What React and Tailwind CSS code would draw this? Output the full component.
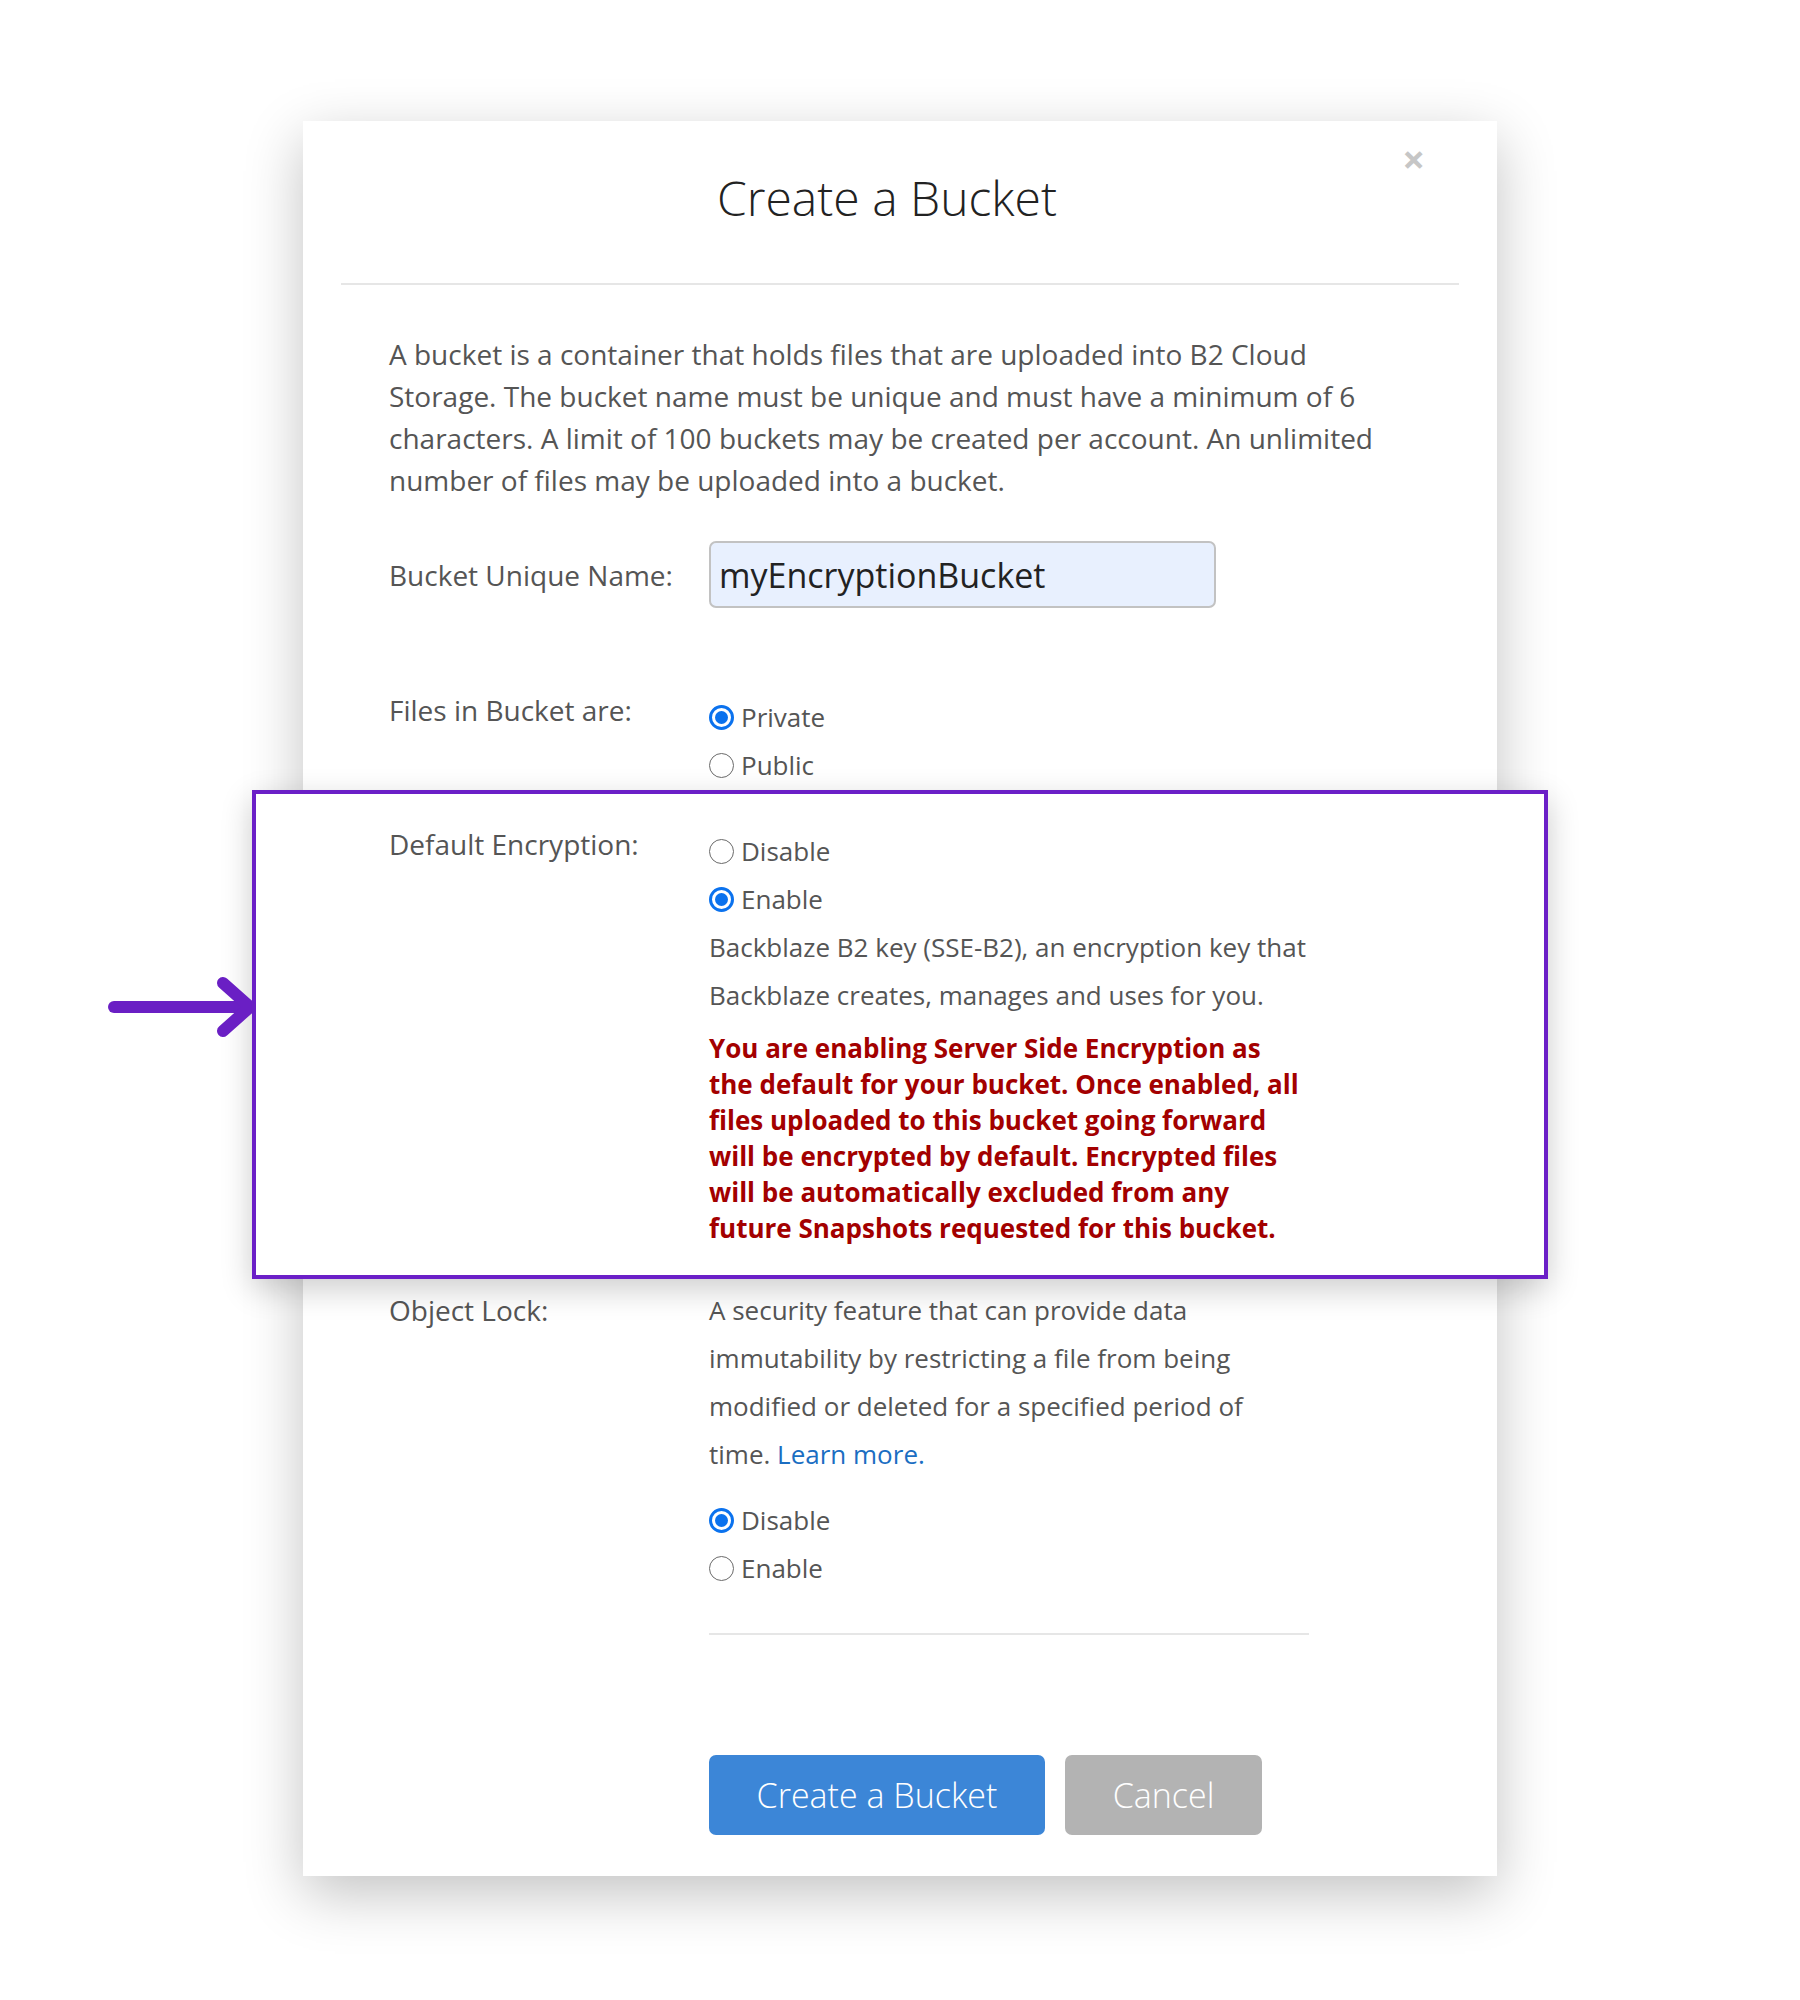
import React from "react";

function Radio({ checked, label }) {
  return (
    <label className="flex h-[48px] items-center">
      {checked ? (
        <span className="flex h-[25px] w-[25px] items-center justify-center rounded-full border-[3px] border-[#0b72ee] bg-white">
          <span className="h-[13px] w-[13px] rounded-full bg-[#0b72ee]" />
        </span>
      ) : (
        <span className="h-[25px] w-[25px] rounded-full border-[1.5px] border-[#6a6a6a] bg-white" />
      )}
      <span className="ml-[7px] text-[26px] text-[#555]">{label}</span>
    </label>
  );
}

export default function App() {
  return (
    <div className="min-h-[2000px] bg-white pt-[121px] font-['Open_Sans',sans-serif]">
      <div className="relative mx-auto w-[1194px] bg-white pb-[41px] shadow-[0_18px_55px_rgba(0,0,0,0.24)]">
        <button className="absolute right-[72px] top-[18px] text-[40px] font-bold leading-none text-[#c6c6c6]">
          ×
        </button>

        <h1 className="pr-[26px] pt-[47px] text-center text-[48px] font-light leading-[60px] text-[#222]">
          Create a Bucket
        </h1>
        <div className="mx-[38px] mt-[55px] h-[2px] bg-[#e6e6e6]" />

        <div className="px-[86px]">
          <p className="mt-[48px] text-[28px] leading-[42px] text-[#555]">
            A bucket is a container that holds files that are uploaded into B2 Cloud
            <br />
            Storage. The bucket name must be unique and must have a minimum of 6
            <br />
            characters. A limit of 100 buckets may be created per account. An unlimited
            <br />
            number of files may be uploaded into a bucket.
          </p>

          <div className="mt-[40px] flex items-center">
            <div className="w-[320px] text-[28px] text-[#555]">Bucket Unique Name:</div>
            <input
              defaultValue="myEncryptionBucket"
              className="h-[67px] w-[507px] rounded-[7px] border-2 border-[#c2c2c2] bg-[#e8f0fe] pl-[8px] text-[34px] text-[#222] outline-none"
            />
          </div>

          <div className="mt-[85px] flex">
            <div className="w-[320px] text-[28px] leading-[34px] text-[#555]">Files in Bucket are:</div>
            <div>
              <Radio checked label="Private" />
              <Radio label="Public" />
            </div>
          </div>
        </div>

        <div className="relative -mx-[51px] mt-[1px] flex border-4 border-[#6b1fc7] bg-white pb-[29px] pl-[133px] pt-[33px] shadow-[0_10px_30px_rgba(0,0,0,0.2)]">
          <svg
            className="absolute left-[-154px] top-[178px] overflow-visible"
            width="152"
            height="70"
            viewBox="0 0 152 70"
          >
            <g stroke="#6a1fc4" strokeWidth="12" strokeLinecap="round" strokeLinejoin="round" fill="none">
              <path d="M12 35 H146" />
              <path d="M121 11 L148 35 L121 59" />
            </g>
          </svg>
          <div className="w-[320px] text-[28px] leading-[34px] text-[#555]">Default Encryption:</div>
          <div className="w-[600px]">
            <Radio label="Disable" />
            <Radio checked label="Enable" />
            <p className="text-[26px] leading-[48px] text-[#555]">
              Backblaze B2 key (SSE-B2), an encryption key that
              <br />
              Backblaze creates, manages and uses for you.
            </p>
            <p className="mt-[11px] text-[26px] font-bold leading-[36px] text-[#a30000]">
              You are enabling Server Side Encryption as
              <br />
              the default for your bucket. Once enabled, all
              <br />
              files uploaded to this bucket going forward
              <br />
              will be encrypted by default. Encrypted files
              <br />
              will be automatically excluded from any
              <br />
              future Snapshots requested for this bucket.
            </p>
          </div>
        </div>

        <div className="px-[86px]">
          <div className="mt-[7px] flex">
            <div className="w-[320px] text-[28px] leading-[48px] text-[#555]">Object Lock:</div>
            <div className="w-[600px]">
              <p className="text-[26px] leading-[48px] text-[#555]">
                A security feature that can provide data
                <br />
                immutability by restricting a file from being
                <br />
                modified or deleted for a specified period of
                <br />
                time.{" "}
                <a href="#" className="text-[#1b6ec2]">
                  Learn more.
                </a>
              </p>
              <div className="mt-[18px]">
                <Radio checked label="Disable" />
                <Radio label="Enable" />
              </div>
              <div className="mt-[41px] h-[2px] bg-[#e6e6e6]" />
              <div className="mt-[120px] flex gap-[20px]">
                <button className="h-[80px] w-[336px] rounded-[7px] bg-[#3c86d7] text-[34px] font-light text-white">
                  Create a Bucket
                </button>
                <button className="h-[80px] w-[197px] rounded-[7px] bg-[#b3b3b3] text-[34px] font-light text-white">
                  Cancel
                </button>
              </div>
            </div>
          </div>
        </div>
      </div>
    </div>
  );
}
